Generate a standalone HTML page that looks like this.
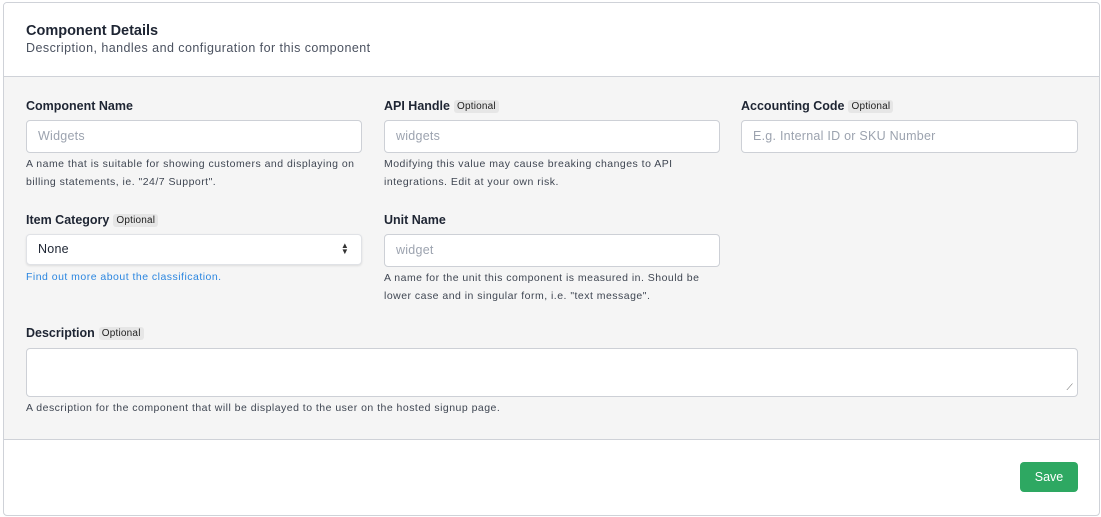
<!DOCTYPE html>
<html><head><style>
*{box-sizing:border-box}
body{margin:0;width:1101px;height:517px;background:#fff;font-family:"Liberation Sans",sans-serif;color:#1f2937;position:relative;overflow:hidden}
.card{position:absolute;left:3px;top:2px;width:1097px;height:514px;border:1px solid #cfd2d8;border-radius:4px;overflow:hidden}
.hdr{position:absolute;left:0;top:0;right:0;height:74px;border-bottom:1px solid #cfd2d8;background:#fff}
.hdr h1{position:absolute;left:22px;top:20px;margin:0;font-size:14.5px;font-weight:600;color:#1e2533}
.hdr p{position:absolute;left:22px;top:38px;margin:0;font-size:12.5px;color:#4b5260;letter-spacing:.45px}
.body{position:absolute;left:0;top:74px;right:0;height:363px;background:#f5f5f5;border-bottom:1px solid #cfd2d8}
.a{position:absolute}
.lbl{font-size:12.5px;font-weight:600;color:#1e2533}
.opt{display:inline-block;background:#e6e6e6;border-radius:3px;font-size:10px;font-weight:400;padding:1px 3px;margin-left:4px;color:#222;vertical-align:1px;letter-spacing:.2px}
.in{height:33px;border:1px solid #cdd0d6;border-radius:4px;background:#fff;font-size:12.5px;color:#9ca3af;padding:8px 11px;letter-spacing:.25px}
.help{font-size:10.5px;color:#3f4652;line-height:18px;letter-spacing:.48px}
.btn{position:absolute;left:1016px;top:459px;width:58px;height:30px;background:#2ea862;border-radius:4px;color:#fff;font-size:12.5px;text-align:center;line-height:30px}
</style></head><body>
<div class="card">
<div class="hdr"><h1>Component Details</h1><p>Description, handles and configuration for this component</p></div>
<div class="body"></div>
<div class="btn">Save</div>
</div>
<div class="a lbl" style="left:26px;top:99px">Component Name</div>
<div class="a in" style="left:26px;top:120px;width:336px">Widgets</div>
<div class="a help" style="left:26px;top:155px;width:340px">A name that is suitable for showing customers and displaying on billing statements, ie. "24/7 Support".</div>
<div class="a lbl" style="left:384px;top:99px">API Handle<span class="opt">Optional</span></div>
<div class="a in" style="left:384px;top:120px;width:336px">widgets</div>
<div class="a help" style="left:384px;top:155px;width:340px">Modifying this value may cause breaking changes to API integrations. Edit at your own risk.</div>
<div class="a lbl" style="left:741px;top:99px">Accounting Code<span class="opt">Optional</span></div>
<div class="a in" style="left:741px;top:120px;width:337px">E.g. Internal ID or SKU Number</div>
<div class="a lbl" style="left:26px;top:213px">Item Category<span class="opt">Optional</span></div>
<div class="a in" style="left:26px;top:234px;width:336px;height:31px;color:#1e2533;border-color:#e0e2e6;box-shadow:0 1px 2px rgba(0,0,0,.1);padding-top:7px">None<span style="position:absolute;right:12px;top:8px;font-size:8px;line-height:6px;color:#333">▲<br>▼</span></div>
<div class="a help" style="left:26px;top:268px;color:#2b86e0">Find out more about the classification.</div>
<div class="a lbl" style="left:384px;top:213px">Unit Name</div>
<div class="a in" style="left:384px;top:234px;width:336px">widget</div>
<div class="a help" style="left:384px;top:269px;width:340px">A name for the unit this component is measured in. Should be lower case and in singular form, i.e. "text message".</div>
<div class="a lbl" style="left:26px;top:326px">Description<span class="opt">Optional</span></div>
<div class="a in" style="left:26px;top:348px;width:1052px;height:49px"><span style="position:absolute;right:4px;bottom:3px;font-size:9px;color:#666">⟋</span></div>
<div class="a help" style="left:26px;top:399px">A description for the component that will be displayed to the user on the hosted signup page.</div>
</body></html>
